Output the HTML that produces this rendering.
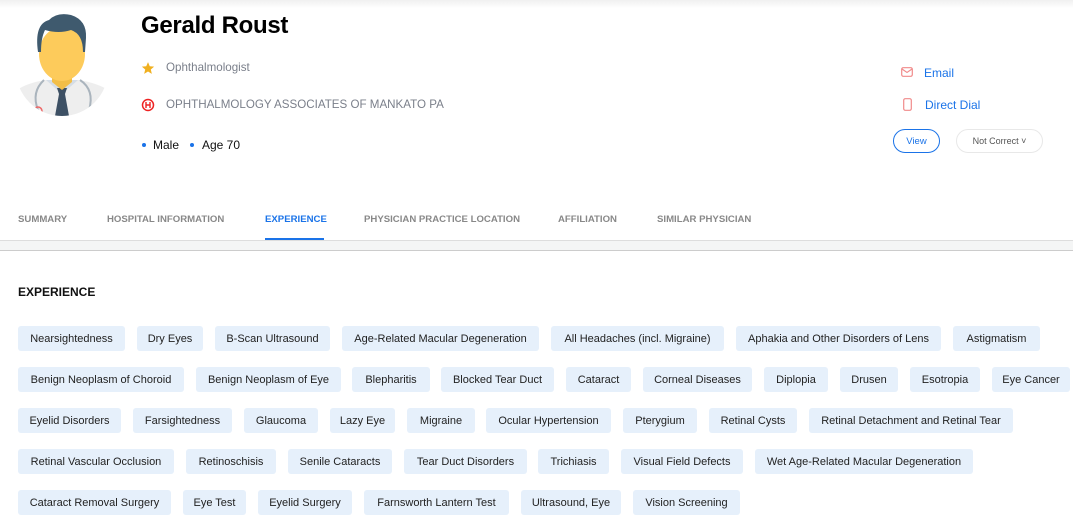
<!DOCTYPE html>
<html><head><meta charset="utf-8"><style>
*{margin:0;padding:0;box-sizing:border-box}
body{width:1073px;height:519px;background:#fff;font-family:"Liberation Sans",Arial,sans-serif;position:relative;overflow:hidden}
.a{position:absolute}
.topsh{left:0;top:0;width:1073px;height:8px;background:linear-gradient(#f0f0f0,#fff)}
h1{position:absolute;left:141px;top:12px;font-size:24px;font-weight:bold;color:#000;letter-spacing:-0.3px}
.g{color:#7a7f8a;font-size:11.6px}
.chip{position:absolute;height:25px;background:#e6f0fb;border-radius:3px;font-size:11px;color:#222;line-height:26px;text-align:center;white-space:nowrap}
.tab{position:absolute;top:214px;font-size:9.6px;font-weight:bold;color:#888}
</style></head><body>
<div class="a topsh"></div>
<svg class="a" style="left:17px;top:12px" width="92" height="104" viewBox="0 0 92 104">
<defs><clipPath id="c"><circle cx="45" cy="58" r="46"/></clipPath></defs>
<g clip-path="url(#c)">
<path d="M-5 104 L-5 82 Q5 72 28 68 L62 68 Q85 72 97 82 L97 104 Z" fill="#eeeeee"/>
<path d="M29 68 L45 82 L61 68 Z" fill="#d5dde6"/>
<path d="M40 76 L50 76 L48 82 L52 104 L38 104 L42 82 Z" fill="#3d5064"/>
<path d="M27 68 Q14 80 21 98" stroke="#aab4bd" stroke-width="2" fill="none"/>
<path d="M63 68 Q78 78 72 98" stroke="#aab4bd" stroke-width="2" fill="none"/>
<circle cx="21" cy="99" r="4" fill="none" stroke="#e66" stroke-width="1.5"/>
</g>
<path d="M35 56 L55 56 L55 70 L45 78 L35 70Z" fill="#f2be48"/>
<ellipse cx="45" cy="42" rx="23" ry="27" fill="#fdcb5b"/>
<path d="M21 40 Q17 12 32 8 Q40 0 54 3 Q70 8 69 26 L68 40 L66 40 Q66 22 54 18 Q42 22 28 18 Q24 26 24 40Z" fill="#3f5a6e"/>
</svg>
<h1>Gerald Roust</h1>
<svg class="a" style="left:141px;top:61px" width="14" height="14" viewBox="0 0 24 24"><path d="M12 2l3 7 7.5.6-5.7 5 1.8 7.4L12 18l-6.6 4 1.8-7.4-5.7-5L9 9z" fill="#f0b020"/></svg>
<div class="a g" style="left:166px;top:61px">Ophthalmologist</div>
<svg class="a" style="left:141px;top:98px" width="14" height="14" viewBox="0 0 14 14"><circle cx="7" cy="7" r="5.5" fill="none" stroke="#e22" stroke-width="1.5"/><path d="M5 4v6M9 4v6M5 7h4" stroke="#e22" stroke-width="1.4"/></svg>
<div class="a g" style="left:166px;top:98px">OPHTHALMOLOGY ASSOCIATES OF MANKATO PA</div>
<div class="a" style="left:142px;top:143px;width:4px;height:4px;border-radius:50%;background:#1a73e8"></div>
<div class="a" style="left:153px;top:138px;font-size:12px;color:#111">Male</div>
<div class="a" style="left:190px;top:143px;width:4px;height:4px;border-radius:50%;background:#1a73e8"></div>
<div class="a" style="left:202px;top:138px;font-size:12px;color:#111">Age 70</div>
<svg class="a" style="left:901px;top:67px" width="12" height="10" viewBox="0 0 12 10"><rect x="0.7" y="0.7" width="10.6" height="8.6" rx="1.5" fill="none" stroke="#f08a8a" stroke-width="1.2"/><path d="M1 2l5 3.5 5-3.5" fill="none" stroke="#f08a8a" stroke-width="1.1"/></svg>
<div class="a" style="left:924px;top:66px;font-size:12px;color:#1a73e8">Email</div>
<svg class="a" style="left:903px;top:98px" width="9" height="13" viewBox="0 0 9 13"><rect x="0.7" y="0.7" width="7.6" height="11.6" rx="1.5" fill="none" stroke="#f08a8a" stroke-width="1.2"/></svg>
<div class="a" style="left:925px;top:98px;font-size:12px;color:#1a73e8">Direct Dial</div>
<div class="a" style="left:893px;top:129px;width:47px;height:24px;border:1px solid #1a73e8;border-radius:12px;font-size:9.5px;color:#1a73e8;text-align:center;line-height:23px">View</div>
<div class="a" style="left:956px;top:129px;width:87px;height:24px;border:1px solid #e8e8e8;border-radius:12px;font-size:9px;color:#555;text-align:center;line-height:23px">Not Correct ˅</div>
<div class="tab" style="left:18px">SUMMARY</div>
<div class="tab" style="left:107px">HOSPITAL INFORMATION</div>
<div class="tab" style="left:265px;color:#1a73e8">EXPERIENCE</div>
<div class="a" style="left:265px;top:238px;width:59px;height:2px;background:#1a73e8"></div>
<div class="tab" style="left:364px">PHYSICIAN PRACTICE LOCATION</div>
<div class="tab" style="left:558px">AFFILIATION</div>
<div class="tab" style="left:657px">SIMILAR PHYSICIAN</div>
<div class="a" style="left:0;top:240px;width:1073px;height:11px;background:#f4f5f5;border-top:1px solid #ddd;border-bottom:1px solid #ccc"></div>
<div class="a" style="left:18px;top:285px;font-size:12px;font-weight:bold;color:#111">EXPERIENCE</div>

<div class="chip" style="top:326px;left:18px;width:107px">Nearsightedness</div>
<div class="chip" style="top:326px;left:137px;width:66px">Dry Eyes</div>
<div class="chip" style="top:326px;left:215px;width:115px">B-Scan Ultrasound</div>
<div class="chip" style="top:326px;left:342px;width:197px">Age-Related Macular Degeneration</div>
<div class="chip" style="top:326px;left:551px;width:173px">All Headaches (incl. Migraine)</div>
<div class="chip" style="top:326px;left:736px;width:205px">Aphakia and Other Disorders of Lens</div>
<div class="chip" style="top:326px;left:953px;width:87px">Astigmatism</div>

<div class="chip" style="top:367px;left:18px;width:166px">Benign Neoplasm of Choroid</div>
<div class="chip" style="top:367px;left:196px;width:145px">Benign Neoplasm of Eye</div>
<div class="chip" style="top:367px;left:352px;width:78px">Blepharitis</div>
<div class="chip" style="top:367px;left:441px;width:113px">Blocked Tear Duct</div>
<div class="chip" style="top:367px;left:566px;width:65px">Cataract</div>
<div class="chip" style="top:367px;left:643px;width:109px">Corneal Diseases</div>
<div class="chip" style="top:367px;left:764px;width:64px">Diplopia</div>
<div class="chip" style="top:367px;left:840px;width:58px">Drusen</div>
<div class="chip" style="top:367px;left:910px;width:70px">Esotropia</div>
<div class="chip" style="top:367px;left:992px;width:78px">Eye Cancer</div>

<div class="chip" style="top:408px;left:18px;width:103px">Eyelid Disorders</div>
<div class="chip" style="top:408px;left:133px;width:99px">Farsightedness</div>
<div class="chip" style="top:408px;left:244px;width:74px">Glaucoma</div>
<div class="chip" style="top:408px;left:330px;width:65px">Lazy Eye</div>
<div class="chip" style="top:408px;left:407px;width:68px">Migraine</div>
<div class="chip" style="top:408px;left:486px;width:125px">Ocular Hypertension</div>
<div class="chip" style="top:408px;left:623px;width:74px">Pterygium</div>
<div class="chip" style="top:408px;left:709px;width:88px">Retinal Cysts</div>
<div class="chip" style="top:408px;left:809px;width:204px">Retinal Detachment and Retinal Tear</div>

<div class="chip" style="top:449px;left:18px;width:156px">Retinal Vascular Occlusion</div>
<div class="chip" style="top:449px;left:186px;width:90px">Retinoschisis</div>
<div class="chip" style="top:449px;left:288px;width:104px">Senile Cataracts</div>
<div class="chip" style="top:449px;left:404px;width:123px">Tear Duct Disorders</div>
<div class="chip" style="top:449px;left:538px;width:71px">Trichiasis</div>
<div class="chip" style="top:449px;left:621px;width:122px">Visual Field Defects</div>
<div class="chip" style="top:449px;left:755px;width:218px">Wet Age-Related Macular Degeneration</div>

<div class="chip" style="top:490px;left:18px;width:153px">Cataract Removal Surgery</div>
<div class="chip" style="top:490px;left:183px;width:63px">Eye Test</div>
<div class="chip" style="top:490px;left:258px;width:94px">Eyelid Surgery</div>
<div class="chip" style="top:490px;left:364px;width:145px">Farnsworth Lantern Test</div>
<div class="chip" style="top:490px;left:521px;width:100px">Ultrasound, Eye</div>
<div class="chip" style="top:490px;left:633px;width:107px">Vision Screening</div>
</body></html>
